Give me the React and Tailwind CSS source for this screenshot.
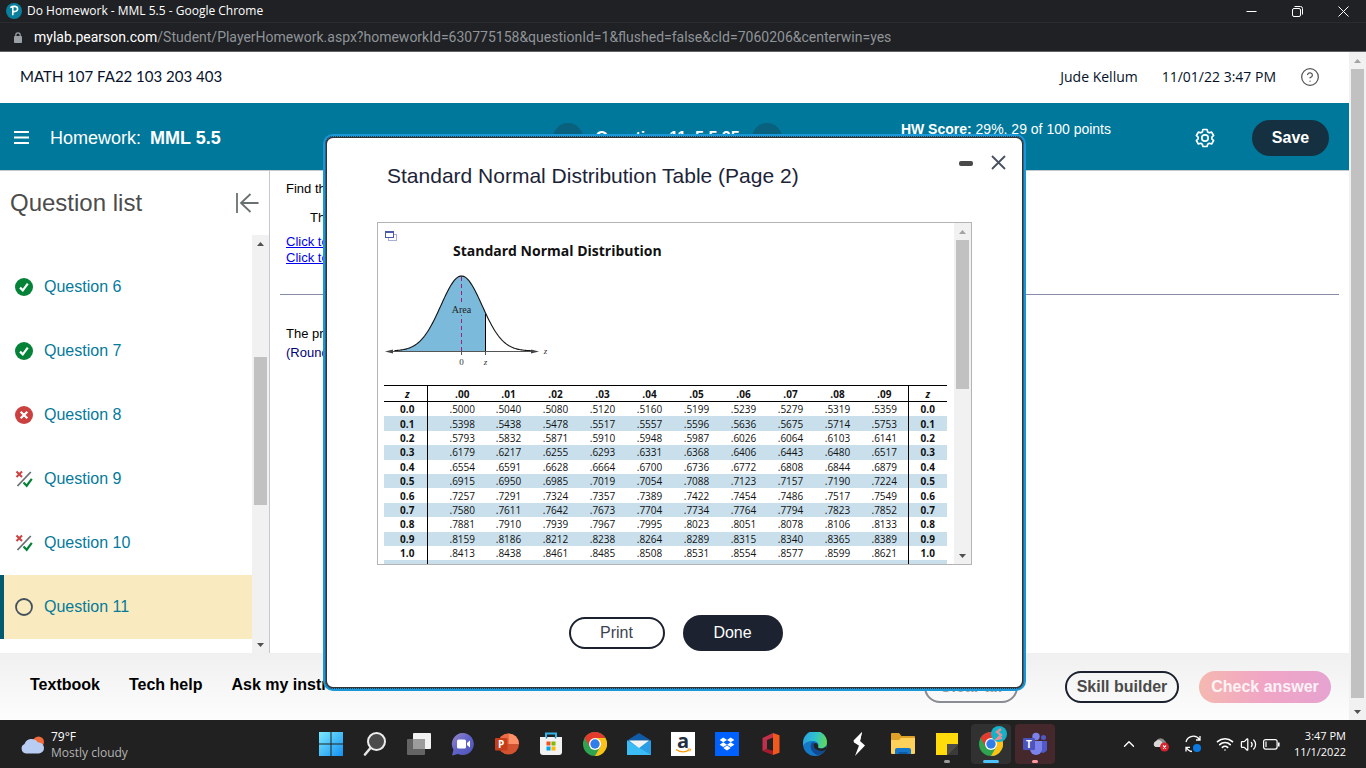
import { ChevronUp, CircleHelp, Wifi, Volume2 } from "lucide-react";

const questions = [
  { id: 6, status: "correct" },
  { id: 7, status: "correct" },
  { id: 8, status: "wrong" },
  { id: 9, status: "partial" },
  { id: 10, status: "partial" },
  { id: 11, status: "open" },
];

const columns = [".00", ".01", ".02", ".03", ".04", ".05", ".06", ".07", ".08", ".09"];

const rows = [
  ["0.0", ".5000", ".5040", ".5080", ".5120", ".5160", ".5199", ".5239", ".5279", ".5319", ".5359"],
  ["0.1", ".5398", ".5438", ".5478", ".5517", ".5557", ".5596", ".5636", ".5675", ".5714", ".5753"],
  ["0.2", ".5793", ".5832", ".5871", ".5910", ".5948", ".5987", ".6026", ".6064", ".6103", ".6141"],
  ["0.3", ".6179", ".6217", ".6255", ".6293", ".6331", ".6368", ".6406", ".6443", ".6480", ".6517"],
  ["0.4", ".6554", ".6591", ".6628", ".6664", ".6700", ".6736", ".6772", ".6808", ".6844", ".6879"],
  ["0.5", ".6915", ".6950", ".6985", ".7019", ".7054", ".7088", ".7123", ".7157", ".7190", ".7224"],
  ["0.6", ".7257", ".7291", ".7324", ".7357", ".7389", ".7422", ".7454", ".7486", ".7517", ".7549"],
  ["0.7", ".7580", ".7611", ".7642", ".7673", ".7704", ".7734", ".7764", ".7794", ".7823", ".7852"],
  ["0.8", ".7881", ".7910", ".7939", ".7967", ".7995", ".8023", ".8051", ".8078", ".8106", ".8133"],
  ["0.9", ".8159", ".8186", ".8212", ".8238", ".8264", ".8289", ".8315", ".8340", ".8365", ".8389"],
  ["1.0", ".8413", ".8438", ".8461", ".8485", ".8508", ".8531", ".8554", ".8577", ".8599", ".8621"],
  ["1.1", ".8643", ".8665", ".8686", ".8708", ".8729", ".8749", ".8770", ".8790", ".8810", ".8830"],
];

function StatusIcon({ status }) {
  if (status === "correct") {
    return (
      <svg width="18" height="18" viewBox="0 0 18 18" aria-label="Correct">
        <circle cx="9" cy="9" r="9" fill="#038238" />
        <path d="M5 9.6l2.8 2.7L12.8 5.6" fill="none" stroke="#fff" strokeWidth="2.2" />
      </svg>
    );
  }
  if (status === "wrong") {
    return (
      <svg width="18" height="18" viewBox="0 0 18 18" aria-label="Incorrect">
        <circle cx="9" cy="9" r="9" fill="#cc4040" />
        <path d="M5.7 5.7l6.6 6.6M12.3 5.7l-6.6 6.6" stroke="#fff" strokeWidth="2.2" />
      </svg>
    );
  }
  if (status === "partial") {
    return (
      <svg width="18" height="18" viewBox="0 0 18 18" fill="none" aria-label="Partially correct">
        <path d="M1.5 1.5l5.5 5.5M7 1.5L1.5 7" stroke="#cc4040" strokeWidth="2" />
        <path d="M15.8 2L2.5 16" stroke="#6a7070" strokeWidth="1.8" />
        <path d="M8.5 12.5l3.200 3.200L16.800 8.800" stroke="#038238" strokeWidth="2.2" />
      </svg>
    );
  }
  return (
    <svg width="18" height="18" viewBox="0 0 18 18" aria-label="Not started">
      <circle cx="9" cy="9" r="8" fill="none" stroke="#44505c" strokeWidth="1.8" />
    </svg>
  );
}

function Arrow({ down, muted }) {
  return (
    <svg width="17" height="17" viewBox="0 0 17 17" className="shrink-0">
      <path d={down ? "M5 7h7l-3.5 4z" : "M5 11h7l-3.5 -4z"} fill={muted ? "#a3a3a3" : "#505050"} />
    </svg>
  );
}

// Track with a thumb; grow values split the free space above and below it
function Scrollbar({ before, thumb, after, muted }) {
  return (
    <div className="flex w-[17px] shrink-0 flex-col bg-[#f1f1f1]">
      <Arrow muted={muted} />
      <div style={{ flexGrow: before }} />
      <div className="mx-0.5 bg-[#c1c1c1]" style={{ flexGrow: thumb }} />
      <div style={{ flexGrow: after }} />
      <Arrow down />
    </div>
  );
}

function BrowserBar() {
  return (
    <header className="shrink-0 border-b border-[#606265] bg-[#202124] font-['Open_Sans','Noto_Sans',sans-serif] text-white">
      <div className="flex h-[23px] items-center border-b border-[#2b2c2f] pl-1.5">
        <svg width="16" height="16" viewBox="0 0 16 16">
          <circle cx="8" cy="8" r="8" fill="#087f9d" />
          <path
            d="M4.3 4.6c3-2 7.3-1.6 7.3 1.3 0 2-2.2 3-4.6 2.7M6.8 4.3v7.9"
            fill="none"
            stroke="#fff"
            strokeWidth="1.6"
          />
        </svg>
        <h1 className="ml-[5px] flex-1 text-xs">Do Homework - MML 5.5 - Google Chrome</h1>
        <div className="flex">
          <button aria-label="Minimize" className="flex h-5 w-[46px] items-center justify-center">
            <svg width="11" height="11" stroke="#fff"><path d="M0.5 5.5h10" /></svg>
          </button>
          <button aria-label="Restore" className="flex h-5 w-[46px] items-center justify-center">
            <svg width="11" height="11" fill="none" stroke="#fff">
              <rect x="0.5" y="2.5" width="8" height="8" rx="1.5" />
              <path d="M2.5 0.5h6q2 0 2 2v6" />
            </svg>
          </button>
          <button aria-label="Close" className="flex h-5 w-[46px] items-center justify-center">
            <svg width="11" height="11" stroke="#fff"><path d="M0.5 0.5l10 10M10.5 0.5l-10 10" /></svg>
          </button>
        </div>
      </div>
      <div className="flex h-7 items-center pl-3.5">
        <svg width="8" height="11" viewBox="0 0 8 11">
          <path d="M1.8 5V3a2.2 2.2 0 0 1 4.4 0v2" fill="none" stroke="#9aa0a6" strokeWidth="1.2" />
          <rect y="4" width="8" height="7" rx="0.8" fill="#9aa0a6" />
        </svg>
        <p className="ml-3 font-[Roboto,sans-serif] text-sm text-[#8f9499]">
          <span className="text-white">mylab.pearson.com</span>
          /Student/PlayerHomework.aspx?homeworkId=630775158&amp;questionId=1&amp;flushed=false&amp;cId=7060206&amp;centerwin=yes
        </p>
      </div>
    </header>
  );
}

function AssignmentBar() {
  return (
    <div className="grid h-[68px] shrink-0 grid-cols-[1fr_auto_1fr] items-center border-b border-[#c7c7d0] bg-[#00789c] pt-0.5 text-white">
      <div className="flex items-center pl-3.5">
        <button aria-label="Menu">
          <svg width="15" height="13" stroke="#fff" strokeWidth="2"><path d="M0 1h15M0 6.5h15M0 12h15" /></svg>
        </button>
        <p className="ml-[21px] text-lg">
          Homework: <b className="ml-1">MML 5.5</b>
        </p>
      </div>
      <div className="mr-3.5 flex items-center gap-3">
        <button aria-label="Previous question" className="size-[30px] rounded-full bg-[#0a617d]" />
        <b className="text-base">Question 11, 5.5.25</b>
        <button aria-label="Next question" className="size-[30px] rounded-full bg-[#0a617d]" />
      </div>
      <div className="flex items-center justify-end pr-5">
        <p className="pb-[18px] text-sm">
          <b>HW Score:</b> 29%, 29 of 100 points
        </p>
        <button aria-label="Settings" className="ml-[84px]">
          <svg width="20" height="20" viewBox="0 0 20 20" fill="none" stroke="#fff" strokeWidth="1.7">
            <path
              d="M8 1.5h4l.7 2.4 1.5.9 2.4-.7 2 3.4-1.7 1.7v1.7l1.7 1.7-2 3.4-2.4-.7-1.5.9-.7 2.3H8l-.7-2.3-1.5-.9-2.4.7-2-3.4 1.7-1.7V9.200L1.400 7.500l2-3.400 2.400.7 1.500-.9z"
              strokeLinejoin="round"
            />
            <circle cx="10" cy="10" r="3.2" />
          </svg>
        </button>
        <button className="ml-[37px] h-9 w-[77px] rounded-full bg-[#153141] text-base font-bold">Save</button>
      </div>
    </div>
  );
}

function QuestionList() {
  return (
    <aside className="flex w-[270px] shrink-0 flex-col border-r border-[#c7c7d0]">
      <div className="flex h-16 shrink-0 items-center justify-between px-2.5">
        <h2 className="text-2xl text-[#4c4c4c]">Question list</h2>
        <button aria-label="Collapse list">
          <svg width="23" height="20" fill="none" stroke="#6a7070" strokeWidth="1.8">
            <path d="M1 0v20M22.5 10H5M14.5 1L5 10l9.5 9" />
          </svg>
        </button>
      </div>
      <div className="flex min-h-0 flex-1">
        <ul className="min-w-0 flex-1 overflow-hidden pt-5">
          {questions.map((q) => (
            <li
              key={q.id}
              className={
                q.status === "open"
                  ? "h-16 border-l-4 border-[#005a70] bg-[#f9ebbf]"
                  : "h-16 border-l-4 border-transparent"
              }
            >
              <a href="#" className="flex h-full items-center gap-[11px] pl-[11px] text-base text-[#047a9c]">
                <StatusIcon status={q.status} />
                Question {q.id}
              </a>
            </li>
          ))}
        </ul>
        <Scrollbar before={105} thumb={148} after={131} />
      </div>
    </aside>
  );
}

function Problem() {
  return (
    <main className="min-w-0 flex-1 px-2.5 text-[13px] leading-4">
      <div className="px-1.5 pt-2.5">
        <p>Find the area.</p>
        <p className="mt-[13px] pl-6">The area</p>
        <p className="mt-2">
          <a href="#" className="text-[#0000ee] underline">Click to view page 1 of the table.</a>
        </p>
        <p>
          <a href="#" className="text-[#0000ee] underline">Click to view page 2 of the table.</a>
        </p>
      </div>
      <hr className="mt-7 border-[#868ca5]" />
      <div className="px-1.5 pt-[31px]">
        <p>The probability is</p>
        <p className="mt-[3px] text-[#00007a]">(Round to four decimal places as needed.)</p>
      </div>
    </main>
  );
}

function FooterBar() {
  return (
    <footer className="flex h-[67px] shrink-0 items-center bg-linear-to-b from-[#f0f0f0] to-[#fdfdfd] pr-[18px] pl-[30px] text-base font-bold">
      <nav className="flex flex-1 gap-[29px] pb-[3px]">
        <a href="#">Textbook</a>
        <a href="#">Tech help</a>
        <a href="#">Ask my instructor</a>
      </nav>
      <button className="h-8 w-[94px] rounded-full border-2 border-[#1c2130] text-[#4a4a4a] opacity-50">Clear all</button>
      <button className="ml-[47px] h-8 w-[114px] rounded-full border-2 border-[#1c2130] text-[#4a4a4a]">
        Skill builder
      </button>
      <button className="ml-5 h-8 w-[132px] rounded-full bg-linear-to-r from-[#f5b8b0] via-[#f0a5c5] to-[#e6a3d0] text-white/85">
        Check answer
      </button>
    </footer>
  );
}

// Points of the bell curve between two x positions
function bell(from, to) {
  const pts = [];
  for (let x = from; x <= to; x += 1) {
    pts.push(`${x},${(82 - 75 * Math.exp(-((x - 77.5) ** 2) / 850)).toFixed(2)}`);
  }
  return pts.join(" ");
}

function BellCurve() {
  return (
    <svg width="170" height="104" viewBox="0 0 170 104" className="mt-2 font-['Liberation_Serif',serif]">
      <polygon points={`10.5,82 ${bell(10.5, 101.5)} 101.5,82`} fill="#7cbadb" />
      <polyline points={bell(10.5, 148.5)} fill="none" stroke="#111" strokeWidth="1.1" />
      <path d="M4 82.5h147M77.5 79v7M101.5 79v7" stroke="#555" fill="none" />
      <path d="M1 82.5l8-2v4zM155 82.5l-8-2v4z" fill="#444" />
      <path d="M77.5 8v75" stroke="#a0207c" strokeDasharray="4 3" />
      <path d="M101.5 45v37" stroke="#000" />
      <rect x="67" y="35" width="21" height="11" fill="#7cbadb" />
      <text x="77.5" y="44" fontSize="10" textAnchor="middle" fill="#222">Area</text>
      <text x="77.5" y="96" fontSize="9" textAnchor="middle" fill="#333">0</text>
      <text x="101.5" y="96" fontSize="9" textAnchor="middle" fontStyle="italic" fill="#333">z</text>
      <text x="161.5" y="85" fontSize="9" textAnchor="middle" fontStyle="italic" fill="#333">z</text>
    </svg>
  );
}

function ZTable() {
  return (
    <table className="mt-3 h-[190px] w-[563px] table-fixed border-collapse text-center text-[10px] leading-[14px] text-[#111]">
      <colgroup>
        <col className="w-[43px]" />
        <col className="w-[58px]" />
        {columns.slice(1).map((c) => (
          <col key={c} className="w-[47px]" />
        ))}
        <col className="w-[39px]" />
      </colgroup>
      <thead>
        <tr className="h-4 border-y border-black">
          <th className="border-r border-black pr-0 pl-1 italic">z</th>
          {columns.map((c, i) => (
            <th key={c} className={i === 0 ? "pl-3" : "p-0"}>{c}</th>
          ))}
          <th className="border-l border-black italic">z</th>
        </tr>
      </thead>
      <tbody>
        {rows.map(([z, ...values], r) => (
          <tr key={z} className={r % 2 ? "bg-[#c9e0ec]" : "bg-white"}>
            <th className="border-r border-black pr-0 pl-1">{z}</th>
            {values.map((v, i) => (
              <td key={v} className={i === 0 ? "pl-3" : "p-0"}>{v}</td>
            ))}
            <th className="border-l border-black">{z}</th>
          </tr>
        ))}
      </tbody>
    </table>
  );
}

function TableDialog() {
  return (
    <section
      role="dialog"
      aria-label="Standard Normal Distribution Table"
      className="w-[699px] self-start rounded-lg border-2 border-[#333] bg-white ring-2 ring-[#1a97d8] outline-1 -outline-offset-1 outline-[#1a97d8] outline-dotted"
    >
      <div className="flex h-21 items-start pt-3 pr-3 pl-[60px]">
        <h2 className="flex-1 pt-3 text-[21px] leading-7 text-[#1c2438]">Standard Normal Distribution Table (Page 2)</h2>
        <button aria-label="Minimize" className="flex size-6 items-center justify-center">
          <span className="mt-0.5 h-[5px] w-[14px] rounded-xs bg-[#4a4a4a]" />
        </button>
        <button aria-label="Close" className="ml-2 flex size-6 items-center justify-center">
          <svg width="15" height="15" stroke="#47505e" strokeWidth="1.8"><path d="M1 1l13 13M14 1L1 14" /></svg>
        </button>
      </div>

      <div className="mx-[50px] flex h-[343px] border border-[#b4b4b4] font-['Open_Sans','Noto_Sans',sans-serif]">
        <div className="min-w-0 flex-1 overflow-hidden pt-2 pl-1.5">
          <div className="flex items-start pl-px">
            <svg width="12" height="10" viewBox="0 0 12 10" fill="#fff">
              <rect x="3.5" y="3.5" width="8" height="6" stroke="#a9aed8" />
              <rect x="0.5" y="0.5" width="8" height="6" stroke="#4a5aa8" />
              <path d="M0 1h9" stroke="#4a5aa8" strokeWidth="2" />
            </svg>
            <h3 className="mt-2.5 ml-14 text-sm font-bold text-[#111]">Standard Normal Distribution</h3>
          </div>
          <BellCurve />
          <ZTable />
        </div>
        <Scrollbar before={0} thumb={149} after={158} muted />
      </div>

      <div className="flex items-center justify-center gap-[18px] pt-[50px] pb-9 pl-0.5 text-base">
        <button className="h-8 w-24 rounded-full border-2 border-[#1c2130] text-[#3c4350]">Print</button>
        <button className="h-9 w-[100px] rounded-full bg-[#1c2230] text-white">Done</button>
      </div>
    </section>
  );
}

function ChromeLogo() {
  return (
    <svg width="24" height="24" viewBox="0 0 24 24">
      <circle cx="12" cy="12" r="12" fill="#2fa350" />
      <path d="M12 12L1.6 6A12 12 0 0 1 22.4 6H12z" fill="#e33b2e" />
      <path d="M1.6 6l5.2 9L12 12V6z" fill="#e33b2e" />
      <path d="M22.4 6A12 12 0 0 1 12 24l5.2-9L12 6z" fill="#fbc116" />
      <circle cx="12" cy="12" r="6" fill="#fff" />
      <circle cx="12" cy="12" r="4.7" fill="#2f7de9" />
    </svg>
  );
}

const apps = [
  {
    name: "Start",
    icon: (
      <svg width="24" height="24" viewBox="0 0 24 24">
        <defs>
          <linearGradient id="win" x1="0" y1="0" x2="1" y2="1">
            <stop offset="0" stopColor="#7ceafc" />
            <stop offset="1" stopColor="#1390f4" />
          </linearGradient>
        </defs>
        <path d="M0 0h11.5v11.5H0zM12.5 0H24v11.5H12.5zM0 12.5h11.5V24H0zM12.5 12.5H24V24H12.5z" fill="url(#win)" />
      </svg>
    ),
  },
  {
    name: "Search",
    icon: (
      <svg width="24" height="24" viewBox="0 0 24 24">
        <circle cx="13.5" cy="9.5" r="8.5" fill="#4b4b4b" stroke="#eee" strokeWidth="2" />
        <path d="M7.5 16L2 22.5" stroke="#e4e4e4" strokeWidth="2.6" strokeLinecap="round" />
      </svg>
    ),
  },
  {
    name: "Task view",
    icon: (
      <svg width="24" height="24" viewBox="0 0 24 24">
        <rect x="6" y="1" width="18" height="16" rx="1" fill="#f2f2f2" />
        <rect x="0" y="7" width="18" height="16" rx="1" fill="#646464" />
        <rect x="6" y="7" width="12" height="10" fill="#9c9c9c" />
      </svg>
    ),
  },
  {
    name: "Chat",
    icon: (
      <svg width="24" height="24" viewBox="0 0 24 24">
        <defs>
          <linearGradient id="chat" x1="0" y1="0" x2="1" y2="1">
            <stop offset="0" stopColor="#9a86c8" />
            <stop offset="0.5" stopColor="#5f62c8" />
            <stop offset="1" stopColor="#5055b8" />
          </linearGradient>
        </defs>
        <path d="M12 1a11 11 0 1 1-5 20.900L1 23.500l1.500-5.800A11 11 0 0 1 12 1z" fill="url(#chat)" />
        <rect x="6" y="7.5" width="9" height="9" rx="1.5" fill="#fff" />
        <path d="M16 11l3-2.5v7L16 13z" fill="#fff" />
      </svg>
    ),
  },
  {
    name: "PowerPoint",
    icon: (
      <svg width="24" height="24" viewBox="0 0 24 24">
        <circle cx="13.5" cy="12" r="10.5" fill="#d35230" />
        <path d="M13.5 1.5A10.5 10.5 0 0 1 24 12H13.5z" fill="#ff9068" />
        <path d="M13.5 1.5A10.5 10.5 0 0 0 3 12h10.5z" fill="#ed6c47" />
        <rect x="0" y="6" width="12.5" height="12.5" rx="1" fill="#c43e1c" />
        <text x="6.2" y="16" fontSize="10" fontWeight="700" textAnchor="middle" fill="#fff">P</text>
      </svg>
    ),
  },
  {
    name: "Microsoft Store",
    icon: (
      <svg width="24" height="24" viewBox="0 0 24 24">
        <path d="M7 6V1.5h10V6" fill="none" stroke="#33b5ea" strokeWidth="2" />
        <path d="M1 5h22v15a3 3 0 0 1-3 3H4a3 3 0 0 1-3-3z" fill="#f2f2f2" />
        <path d="M7.500 6.500V5M16.500 6.500V5" stroke="#1b8cc4" strokeWidth="1.500" />
        <path d="M7.5 9.5h4v4h-4z" fill="#f25022" />
        <path d="M12.5 9.5h4v4h-4z" fill="#7fba00" />
        <path d="M7.5 14.5h4v4h-4z" fill="#00a4ef" />
        <path d="M12.5 14.5h4v4h-4z" fill="#ffb900" />
      </svg>
    ),
  },
  { name: "Chrome", icon: <ChromeLogo /> },
  {
    name: "Mail",
    icon: (
      <svg width="24" height="24" viewBox="0 0 24 24">
        <path d="M0 8.5L12 1l12 7.5z" fill="#0f5ba8" />
        <path d="M0 8.5h24V23H0z" fill="#2a9de4" />
        <path d="M0 8.5l24 14.5H0z" fill="#3cbcf4" />
        <path d="M2 8.5h20L12 16z" fill="#f3f3f3" />
      </svg>
    ),
  },
  {
    name: "Amazon",
    icon: (
      <svg width="24" height="24" viewBox="0 0 24 24">
        <rect width="24" height="24" fill="#fff" />
        <text x="12" y="15.5" fontSize="20" fontWeight="700" textAnchor="middle" fill="#232f3e" fontFamily="Open Sans">a</text>
        <path d="M5 17.5q7 4.5 13 .5" fill="none" stroke="#f90" strokeWidth="1.4" />
        <path d="M16.5 17h3l-.7 2.5" fill="none" stroke="#f90" />
      </svg>
    ),
  },
  {
    name: "Dropbox",
    icon: (
      <svg width="24" height="24" viewBox="0 0 24 24">
        <rect width="24" height="24" fill="#0061fe" />
        <path
          d="M8.3 5.5l3.7 2.4-3.7 2.4-3.7-2.4zM15.7 5.5l3.7 2.4-3.7 2.4L12 7.9zM8.3 10.3l3.7 2.4-3.7 2.4-3.7-2.4zM15.7 10.3l3.7 2.4-3.7 2.4-3.7-2.4zM12 13.6l3.7 2.4-3.7 2.4L8.3 16z"
          fill="#fff"
        />
      </svg>
    ),
  },
  {
    name: "Office",
    icon: (
      <svg width="24" height="24" viewBox="0 0 24 24">
        <path d="M3.5 6L14 1v4.5L8 8v9l-4.5 2z" fill="#c0304a" />
        <path d="M14 1l6.5 2.3v17.4L14 23z" fill="#f0581e" />
        <path d="M3.5 19L8 17l6 1.8V23z" fill="#a51c2c" />
      </svg>
    ),
  },
  {
    name: "Edge",
    icon: (
      <svg width="24" height="24" viewBox="0 0 24 24">
        <defs>
          <linearGradient id="edge" x1="0" y1="0.2" x2="1" y2="0.4">
            <stop offset="0" stopColor="#2a9fe0" />
            <stop offset="0.5" stopColor="#2fc0d0" />
            <stop offset="1" stopColor="#5cd860" />
          </linearGradient>
        </defs>
        <circle cx="12" cy="12" r="12" fill="#1479c8" />
        <path d="M0 11A12 12 0 0 1 24 10.500c0 5-6 7-9 5 1.500-2.500 0-6-4-6.500C5 8.500 1 11 0 14z" fill="url(#edge)" />
        <path d="M8.500 11c-2.500 5 1 11 7 12 3-.5 5.500-2.500 7-5-5 2.500-12 0-12-5 0-1.500 1-2.500 1-2.500-1-.5-2.500-.3-3 .5z" fill="#0f4a92" />
        <path d="M11 11.500c2-1.500 4.500.5 4 3-.5 1.500 2 2.500 5 1.700 1.500-.4 2.700-1.200 3.500-2.200-.2 1.500-.5 2.700-1 4-5 2.500-12 0-12-5 0-.6.200-1.200.5-1.500z" fill="#212121" />
      </svg>
    ),
  },
  {
    name: "Shortcut",
    icon: (
      <svg width="24" height="24" viewBox="0 0 24 24">
        <path d="M15 0L7 9.500l5 4L8 24l10-10.500-5-4.500z" fill="#fff" />
        <path d="M15 0L6.500 8.500l.5 2 5 3z" fill="#fff" />
      </svg>
    ),
  },
  {
    name: "File Explorer",
    icon: (
      <svg width="24" height="24" viewBox="0 0 24 24">
        <path d="M0 2q0-1 1-1h7l2.5 3H23q1 0 1 1v6H0z" fill="#dfa027" />
        <path d="M0 8h8l2-2h14v15q0 1-1 1H1q-1 0-1-1z" fill="#fdd15a" />
        <path d="M4 22v-4q0-2 2-2h12q2 0 2 2v4z" fill="#1477cc" />
        <path d="M7.5 22v-2h9v2z" fill="#0d5ba3" />
      </svg>
    ),
  },
  {
    name: "Sticky Notes",
    indicator: "w-1.5 bg-[#9a9a9a]",
    icon: (
      <svg width="24" height="24" viewBox="0 0 24 24">
        <path d="M1 1h22v11L12 23H1z" fill="#ffdb0c" />
        <path d="M23 12v11H12z" fill="#3a3a3a" />
        <path d="M12 12h11L12 23z" fill="#4c4c4c" />
      </svg>
    ),
  },
  {
    name: "Chrome profile",
    box: "bg-[#313131]",
    indicator: "w-4 bg-[#4cc2ff]",
    icon: (
      <span className="relative">
        <ChromeLogo />
        <svg width="16" height="16" viewBox="0 0 16 16" className="absolute -top-1.5 -right-1">
          <circle cx="8" cy="8" r="8" fill="#14b2c8" />
          <path d="M10 3l-4 3 4 3-4 4 5-1" fill="none" stroke="#ee8c94" strokeWidth="2.2" />
        </svg>
      </span>
    ),
  },
  {
    name: "Teams",
    box: "bg-[#44282b]",
    indicator: "w-1.5 bg-[#ff99a4]",
    icon: (
      <svg width="24" height="24" viewBox="0 0 24 24">
        <circle cx="13" cy="4.5" r="3.7" fill="#7b83eb" />
        <circle cx="20.5" cy="5.5" r="2.5" fill="#5059c9" />
        <path d="M16 9h8v6a4 4 0 0 1-8 3z" fill="#5059c9" />
        <path d="M7 9h12v8a6 6 0 0 1-12 0z" fill="#7b83eb" />
        <rect y="6" width="12" height="12" rx="1" fill="#4b53bc" />
        <text x="6" y="15.5" fontSize="10" fontWeight="700" textAnchor="middle" fill="#fff">T</text>
      </svg>
    ),
  },
];

function Taskbar() {
  return (
    <footer className="grid h-12 shrink-0 grid-cols-[1fr_auto_1fr] bg-[#212121] font-['Open_Sans','Noto_Sans',sans-serif] text-xs text-white">
      <div className="flex items-center gap-1.5 pt-0.5 pl-5">
        <svg width="25" height="18" viewBox="0 0 25 18">
          <circle cx="18.5" cy="6" r="5.5" fill="#f26a3a" />
          <path d="M6 17.5A5 5 0 0 1 4.500 8 7.500 7.500 0 0 1 18 6.500a5.500 5.500 0 0 1 1 11z" fill="#b9cdf2" />
        </svg>
        <div className="leading-4">
          <p>79°F</p>
          <p className="text-[#b4b4b4]">Mostly cloudy</p>
        </div>
      </div>
      <div className="flex items-center">
        {apps.map((app) => (
          <div key={app.name} className="flex w-11 justify-center">
            <button
              aria-label={app.name}
              className={`relative flex size-10 items-center justify-center rounded-sm ${app.box || ""}`}
            >
              {app.icon}
              {app.indicator && (
                <span className={`absolute bottom-px h-[3px] rounded-full ${app.indicator}`} />
              )}
            </button>
          </div>
        ))}
      </div>
      <div className="flex items-center justify-end pr-5">
        <ChevronUp size={18} strokeWidth={1.8} />
        <svg width="18" height="16" viewBox="0 0 18 16" className="ml-3.5">
          <path d="M3 10a3.5 3.5 0 0 1 1-5 5 5 0 0 1 9 0 3 3 0 0 1 0 5z" fill="#8c8c8c" />
          <path d="M3.5 11a3 3 0 0 1 0-5.500 4 4 0 0 1 6 5.500z" fill="#d8d8d8" />
          <circle cx="12.5" cy="11" r="4.5" fill="#d8232f" />
          <path d="M11 9.5l3 3M14 9.5l-3 3" stroke="#fff" strokeWidth="1.1" />
        </svg>
        <svg width="18" height="18" viewBox="0 0 18 18" fill="none" stroke="#fff" strokeWidth="1.3" className="ml-3.5">
          <path d="M2 7a7.5 7.5 0 0 1 13.5-2.500M16 1v4h-4M8 16.500a7 7 0 0 1-5.500-4M2 16.500v-4.200h4" />
          <circle cx="13" cy="13" r="4" fill="#0a7ae0" stroke="none" />
        </svg>
        <Wifi size={18} strokeWidth={2.2} className="ml-3.5" />
        <Volume2 size={17} strokeWidth={1.8} className="ml-1.5" />
        <svg width="17" height="11" viewBox="0 0 17 11" className="ml-1.5" fill="none" stroke="#fff" strokeWidth="1.2">
          <rect x="0.6" y="0.6" width="13.5" height="9.5" rx="2" />
          <path d="M3 2.5v5.5" />
          <path d="M15.8 3.5v4" strokeWidth="1.6" />
        </svg>
        <div className="ml-3.5 text-right text-[11px] leading-4">
          <p>3:47 PM</p>
          <p>11/1/2022</p>
        </div>
      </div>
    </footer>
  );
}

export default function App() {
  return (
    <div className="flex h-screen flex-col overflow-hidden bg-white font-['Liberation_Sans',Arial,sans-serif] text-black">
      <BrowserBar />

      <div className="flex min-h-0 flex-1">
        <div className="relative flex min-w-0 flex-1 flex-col">
          {/* Course header */}
          <div className="flex h-[51px] shrink-0 items-center pr-[29px] pb-px pl-5 font-['Open_Sans',sans-serif] text-sm text-[#05112a]">
            <p className="flex-1 font-[Lato,sans-serif] text-[15px]">MATH 107 FA22 103 203 403</p>
            <p>Jude Kellum</p>
            <p className="ml-6">11/01/22 3:47 PM</p>
            <button aria-label="Help" className="ml-6">
              <CircleHelp size={20} strokeWidth={1.5} color="#555" />
            </button>
          </div>
          <AssignmentBar />
          <div className="flex min-h-0 flex-1">
            <QuestionList />
            <Problem />
          </div>
          <FooterBar />

          {/* Dialog over the page */}
          <div className="absolute inset-0 flex justify-center pt-[84px]">
            <TableDialog />
          </div>
        </div>
        <Scrollbar before={0} thumb={629} after={5} muted />
      </div>

      <Taskbar />
    </div>
  );
}
